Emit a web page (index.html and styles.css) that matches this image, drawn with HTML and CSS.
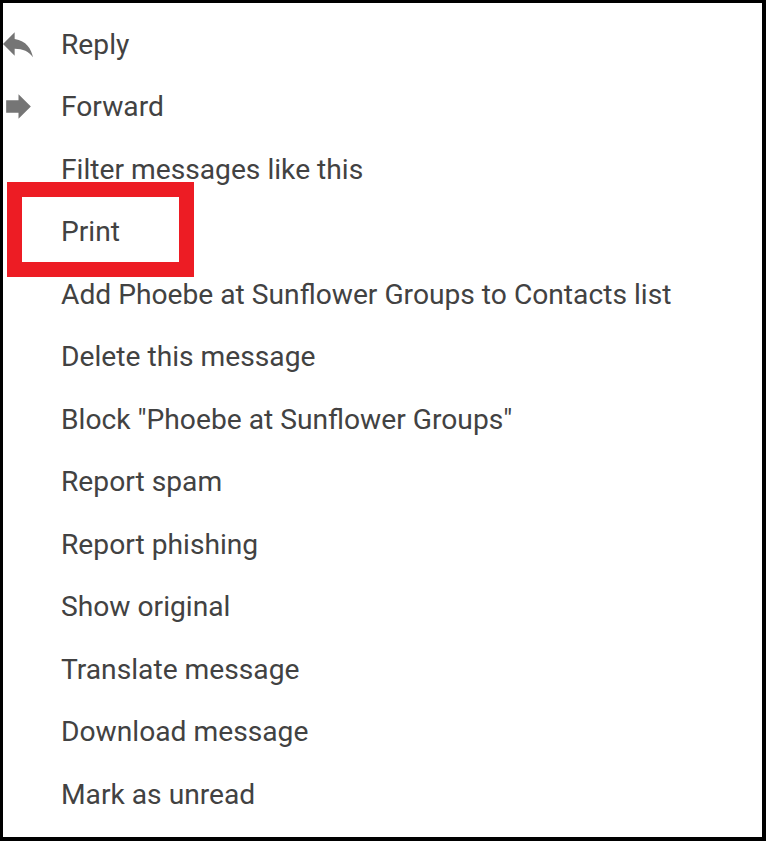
FILE: index.html
```html
<!DOCTYPE html>
<html lang="en">
<head>
<meta charset="utf-8">
<title>Message menu</title>
<link rel="stylesheet" href="styles.css">
</head>
<body>
<div class="frame">
  <ul class="menu">
    <li class="item">
      <span class="slot"><svg class="ic ic-reply" viewBox="0 0 24 24"><path d="M10 9V5l-7 7 7 7v-4.1c5 0 8.5 1.6 11 5.1-1-5-4-10-11-11z"/></svg></span>
      <span class="label">Reply</span>
    </li>
    <li class="item">
      <span class="slot"><svg class="ic ic-forward" viewBox="0 0 24 24"><path d="M12 8V4l8 8-8 8v-4H4V8z"/></svg></span>
      <span class="label">Forward</span>
    </li>
    <li class="item"><span class="slot"></span><span class="label">Filter messages like this</span></li>
    <li class="item"><span class="slot"></span><span class="label">Print</span></li>
    <li class="item"><span class="slot"></span><span class="label">Add Phoebe at Sunflower Groups to Contacts list</span></li>
    <li class="item"><span class="slot"></span><span class="label">Delete this message</span></li>
    <li class="item"><span class="slot"></span><span class="label">Block "Phoebe at Sunflower Groups"</span></li>
    <li class="item"><span class="slot"></span><span class="label">Report spam</span></li>
    <li class="item"><span class="slot"></span><span class="label">Report phishing</span></li>
    <li class="item"><span class="slot"></span><span class="label">Show original</span></li>
    <li class="item"><span class="slot"></span><span class="label">Translate message</span></li>
    <li class="item"><span class="slot"></span><span class="label">Download message</span></li>
    <li class="item"><span class="slot"></span><span class="label">Mark as unread</span></li>
  </ul>
  <div class="highlight"></div>
</div>
</body>
</html>
```

FILE: styles.css
```css
html, body {
  margin: 0;
  padding: 0;
  background: #ffffff;
}
.frame {
  position: relative;
  box-sizing: border-box;
  width: 766px;
  height: 841px;
  border-style: solid;
  border-color: #000000;
  border-width: 3px 4px 4px 3px;
  background: #ffffff;
  overflow: hidden;
}
.menu {
  list-style: none;
  margin: 0;
  padding: 10px 0 0 0;
  font-family: Roboto, "Liberation Sans", sans-serif;
  font-size: 28.2px;
  color: #424242;
}
.item {
  display: flex;
  align-items: center;
  height: 62.5px;
  white-space: nowrap;
}
.slot {
  flex: 0 0 58px;
  display: flex;
  align-items: center;
}
.ic {
  fill: #757575;
  flex-shrink: 0;
  overflow: visible;
}
.ic-reply {
  width: 40px;
  height: 40px;
  margin-left: -5px;
}
.ic-forward {
  width: 37px;
  height: 37px;
  margin-left: -3px;
}
.highlight {
  position: absolute;
  left: 4px;
  top: 179px;
  width: 187px;
  height: 95px;
  box-sizing: border-box;
  border: 15px solid #ed1c24;
}
```
